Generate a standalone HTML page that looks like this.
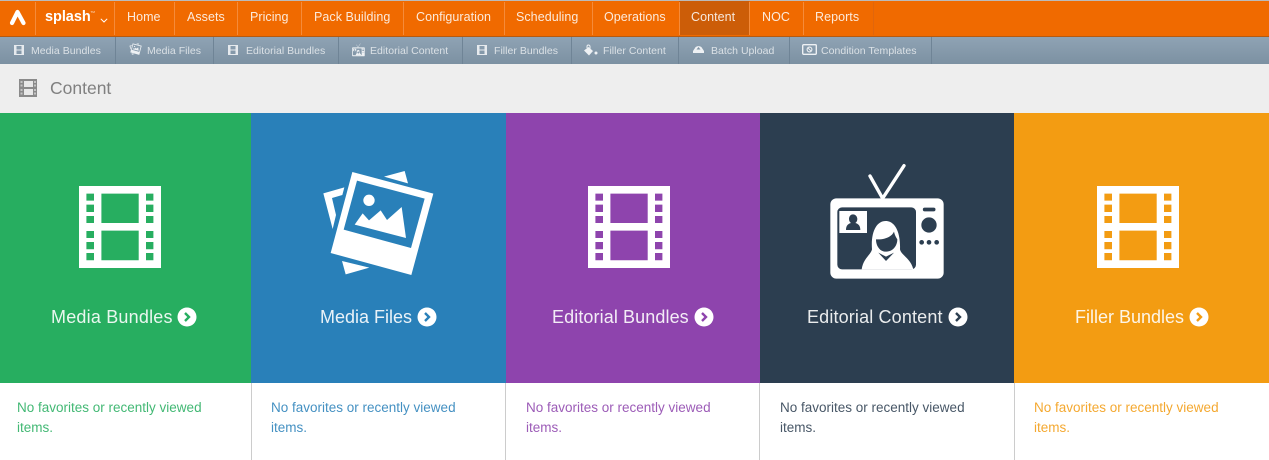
<!DOCTYPE html>
<html><head><meta charset="utf-8"><title>Content</title>
<style>
html,body{margin:0;padding:0;background:#fff}
body{position:relative;width:1269px;height:460px;overflow:hidden;font-family:"Liberation Sans",Arial,sans-serif}
.a{position:absolute;white-space:nowrap}
#top{left:0;top:0;width:1269px;height:37px;background:#f06a00;border-top:1px solid #bbb;border-bottom:1px solid #b65a10;box-sizing:border-box}
#sub{left:0;top:37px;width:1269px;height:27px;background:linear-gradient(#8fa3b4,#7c91a2)}
#hd{left:0;top:64px;width:1269px;height:49px;background:#eee}
.s{top:2px;width:1px;height:33px;background:#f58b3a}
.n{top:0;line-height:35px;font-size:12.5px;letter-spacing:.05px;color:#fff;opacity:.86}
.v{top:37px;width:1px;height:27px;background:#6f8496}
.m{top:37px;line-height:28px;font-size:10.5px;letter-spacing:.03px;color:#fff;opacity:.7}
.c{top:113px;height:270px}
.t{top:305px;line-height:24px;font-size:18px;color:#fff;opacity:.9}
.b{top:398px;font-size:13.5px;line-height:20px;white-space:normal;width:215px;opacity:.87}
.d{top:383px;width:1px;height:77px;background:#ccc}
svg{position:absolute;overflow:visible}
</style></head><body>
<svg width="0" height="0" style="position:absolute"><defs>
<symbol id="film" viewBox="0 0 82 82"><path fill-rule="evenodd" d="M0 0H82V82H0ZM7.4 7.6V14.6H15V7.6ZM7.4 18.6V26H15V18.6ZM7.4 30V37H15V30ZM7.4 45V52H15V45ZM7.4 56V63.3H15V56ZM7.4 67V74.3H15V67ZM67 7.6V14.6H74.4V7.6ZM67 18.6V26H74.4V18.6ZM67 30V37H74.4V30ZM67 45V52H74.4V45ZM67 56V63.3H74.4V56ZM67 67V74.3H74.4V67ZM22.4 7.6V37H59.7V7.6ZM22.4 44.6V74.3H59.7V44.6Z"/></symbol>
<symbol id="sf" viewBox="0 0 10 10"><path fill-rule="evenodd" d="M0 0H10V10H0ZM2.500 1V4.500H7.500V1ZM2.500 5.500V9H7.500V5.500Z"/></symbol>
<symbol id="photo" viewBox="0 0 405 375"><path fill-rule="evenodd" d="M127 36L370 101L304 345L62 279ZM141 62L101 209L303 264L344 116Z"/><path d="M134 194L158 160L177 181L212 151L231 180L275 141L288 234Z"/><circle cx="177" cy="121" r="17"/><path d="M40 100L103 82L97 105L66 114L78 165L68 207ZM222 50L284 33L294 70ZM96 303L178 323L107 343Z"/></symbol>
<symbol id="tv" viewBox="0 0 405 375"><path fill-rule="evenodd" d="M49 115H353A18 18 0 0 1 371 133V338A18 18 0 0 1 353 356H49A18 18 0 0 1 31 338V133A18 18 0 0 1 49 115ZM66 142A14 14 0 0 0 52 156V314A14 14 0 0 0 66 328H274A14 14 0 0 0 288 314V156A14 14 0 0 0 274 142ZM314 143A5.500 5.500 0 0 0 314 154H341A5.500 5.500 0 0 0 341 143ZM327 172A23 23 0 1 0 327 218A23 23 0 1 0 327 172ZM305 240A7 7 0 1 0 305 254A7 7 0 1 0 305 240ZM327 240A7 7 0 1 0 327 254A7 7 0 1 0 327 240ZM350 240A7 7 0 1 0 350 254A7 7 0 1 0 350 240Z"/><path d="M150 48L186 112M252 17L190 112" fill="none" stroke="currentColor" stroke-width="10" stroke-linecap="round"/><path fill-rule="evenodd" d="M58 153H141V219H58ZM99 163C91 163 87 170 87 177C87 183 90 187 93 189C86 191 78 195 78 210H121C121 195 113 191 106 189C109 187 112 183 112 177C112 170 107 163 99 163Z"/><path fill-rule="evenodd" d="M156 268C152 215 170 183 197 183C224 183 242 215 240 268C243 285 272 295 280 328H125C130 295 152 285 156 268ZM168 238C168 258 180 275 198 275C218 275 232 258 232 238C228 232 224 225 222 215C215 232 190 240 168 238ZM175 278L198 303L222 278L198 290Z"/></symbol>
</defs></svg>

<div class="a" id="top"></div><div class="a" id="sub"></div><div class="a" id="hd"></div>

<svg style="left:9px;top:10px" width="18" height="16" viewBox="0 0 18 16"><path d="M8.500 2L3 13M8.500 2L14.500 13" fill="none" stroke="#fff" stroke-width="4.200" stroke-linecap="round"/></svg>
<div class="a" style="left:45px;top:0;line-height:35px;font-size:14.5px;letter-spacing:-.05px;font-weight:bold;color:#fff">splash</div>
<div class="a" style="left:90.500px;top:10px;font-size:3px;color:#fff;line-height:5px;opacity:.8">TM</div>
<svg style="left:100px;top:18px" width="8" height="5" viewBox="0 0 8 5"><path d="M.8.8L4 4L7.200.8" fill="none" stroke="#fff" stroke-width="1"/></svg>

<div class="a s" style="left:35px"></div><div class="a s" style="left:114px"></div><div class="a s" style="left:174px"></div><div class="a s" style="left:237px"></div><div class="a s" style="left:301px"></div><div class="a s" style="left:403px"></div><div class="a s" style="left:504px"></div><div class="a s" style="left:592px"></div>
<div class="a" style="left:679px;top:1px;width:70px;height:34px;background:#cc5d08"></div>
<div class="a s" style="left:679px"></div><div class="a s" style="left:749px"></div><div class="a s" style="left:803px"></div><div class="a s" style="left:873px;background:#e0660c"></div>

<div class="a n" style="left:127px">Home</div><div class="a n" style="left:187px">Assets</div><div class="a n" style="left:250px">Pricing</div><div class="a n" style="left:314px">Pack Building</div><div class="a n" style="left:416px">Configuration</div><div class="a n" style="left:516px">Scheduling</div><div class="a n" style="left:604px">Operations</div><div class="a n" style="left:691px">Content</div><div class="a n" style="left:762px">NOC</div><div class="a n" style="left:815px">Reports</div>

<div class="a v" style="left:115px"></div><div class="a v" style="left:213px"></div><div class="a v" style="left:338px"></div><div class="a v" style="left:462px"></div><div class="a v" style="left:571px"></div><div class="a v" style="left:678px"></div><div class="a v" style="left:789px"></div><div class="a v" style="left:931px"></div>

<svg style="left:14px;top:45px;fill:#e6eaee" width="10" height="10"><use href="#sf"/></svg>
<svg style="left:128px;top:42px;color:#eef1f4;fill:#eef1f4" width="15" height="14"><use href="#photo"/></svg>
<svg style="left:228px;top:45px;fill:#e6eaee" width="10" height="10"><use href="#sf"/></svg>
<svg style="left:351px;top:43px;color:#eef1f4;fill:#eef1f4" width="15" height="14"><use href="#tv"/></svg>
<svg style="left:477px;top:45px;fill:#e6eaee" width="10" height="10"><use href="#sf"/></svg>
<svg style="left:583px;top:44px" width="15" height="12" viewBox="0 0 15 12"><path d="M1 6.500L5.500 3L10 7L6 11.500Z" fill="#eef1f4"/><path d="M4 4V2.500A1.500 1.500 0 0 1 7 2.500V5" fill="none" stroke="#eef1f4" stroke-width="1"/><circle cx="13" cy="9" r="1.500" fill="#eef1f4"/></svg>
<svg style="left:693px;top:46px" width="11" height="7" viewBox="0 0 11 7"><path d="M0 5L2 2C3 -.5 8 -.5 9 2L11 5V7H0Z" fill="#eef1f4"/><path d="M5.500 1L3.500 3.500H7.500Z" fill="#7f94a5"/></svg>
<svg style="left:802px;top:44px" width="15" height="11" viewBox="0 0 15 11"><rect x=".7" y=".7" width="13.600" height="9.600" rx="1" fill="none" stroke="#eef1f4" stroke-width="1.400"/><circle cx="7.500" cy="5.500" r="2.400" fill="none" stroke="#eef1f4" stroke-width="1.100"/><path d="M5.800 3.800L9.200 7.200" stroke="#eef1f4" stroke-width="1"/></svg>

<div class="a m" style="left:31px">Media Bundles</div><div class="a m" style="left:147px">Media Files</div><div class="a m" style="left:246px">Editorial Bundles</div><div class="a m" style="left:370px">Editorial Content</div><div class="a m" style="left:494px">Filler Bundles</div><div class="a m" style="left:603px">Filler Content</div><div class="a m" style="left:711px">Batch Upload</div><div class="a m" style="left:821px">Condition Templates</div>

<svg style="left:19px;top:79px" width="18" height="18" viewBox="0 0 18 18"><rect width="18" height="18" fill="#8a8a8a"/><path d="M5 2H14V8H5ZM5 10H14V16H5Z" fill="#e8e8e8"/><path d="M1.500 2H3.500V4H1.500ZM1.500 5.500H3.500V7.500H1.500ZM1.500 10H3.500V12H1.500ZM1.500 13.500H3.500V15.500H1.500ZM15 2H17V4H15ZM15 5.500H17V7.500H15ZM15 10H17V12H15ZM15 13.500H17V15.500H15Z" fill="#c4c4c4"/></svg>
<div class="a" style="left:50px;top:64px;line-height:49px;font-size:17.5px;color:#808080">Content</div>

<div class="a c" style="left:0;width:251px;background:#27ae60"></div>
<div class="a c" style="left:251px;width:255px;background:#2980b9"></div>
<div class="a c" style="left:506px;width:254px;background:#8e44ad"></div>
<div class="a c" style="left:760px;width:254px;background:#2c3e50"></div>
<div class="a c" style="left:1014px;width:255px;background:#f39c12"></div>

<svg style="left:79px;top:186px;fill:#fff" width="82" height="82"><use href="#film"/></svg>
<svg style="left:310px;top:160px;fill:#fff" width="135" height="125"><use href="#photo"/></svg>
<svg style="left:588px;top:186px;fill:#fff" width="82" height="82"><use href="#film"/></svg>
<svg style="left:820px;top:160px;fill:#fff;color:#fff" width="135" height="125"><use href="#tv"/></svg>
<svg style="left:1097px;top:186px;fill:#fff" width="82" height="82"><use href="#film"/></svg>

<div class="a t" style="left:51px;letter-spacing:.2px">Media Bundles</div>
<div class="a t" style="left:320px">Media Files</div>
<div class="a t" style="left:552px;letter-spacing:.1px">Editorial Bundles</div>
<div class="a t" style="left:807px;letter-spacing:.15px">Editorial Content</div>
<div class="a t" style="left:1075px">Filler Bundles</div>

<svg style="left:177px;top:307px" width="20" height="20"><circle cx="10" cy="10" r="9.500" fill="#fff"/><path d="M8 6L12 10L8 14" fill="none" stroke="#27ae60" stroke-width="2.400"/></svg>
<svg style="left:416.500px;top:307px" width="20" height="20"><circle cx="10" cy="10" r="9.500" fill="#fff"/><path d="M8 6L12 10L8 14" fill="none" stroke="#2980b9" stroke-width="2.400"/></svg>
<svg style="left:693.500px;top:307px" width="20" height="20"><circle cx="10" cy="10" r="9.500" fill="#fff"/><path d="M8 6L12 10L8 14" fill="none" stroke="#8e44ad" stroke-width="2.400"/></svg>
<svg style="left:947.500px;top:307px" width="20" height="20"><circle cx="10" cy="10" r="9.500" fill="#fff"/><path d="M8 6L12 10L8 14" fill="none" stroke="#2c3e50" stroke-width="2.400"/></svg>
<svg style="left:1188.500px;top:307px" width="20" height="20"><circle cx="10" cy="10" r="9.500" fill="#fff"/><path d="M8 6L12 10L8 14" fill="none" stroke="#f39c12" stroke-width="2.400"/></svg>

<div class="a b" style="left:17px;color:#27ae60">No favorites or recently viewed items.</div>
<div class="a b" style="left:271px;color:#2980b9">No favorites or recently viewed items.</div>
<div class="a b" style="left:526px;color:#8e44ad">No favorites or recently viewed items.</div>
<div class="a b" style="left:780px;color:#2c3e50">No favorites or recently viewed items.</div>
<div class="a b" style="left:1034px;color:#f39c12">No favorites or recently viewed items.</div>

<div class="a d" style="left:251px"></div><div class="a d" style="left:505px"></div><div class="a d" style="left:759px"></div><div class="a d" style="left:1014px"></div>
</body></html>
